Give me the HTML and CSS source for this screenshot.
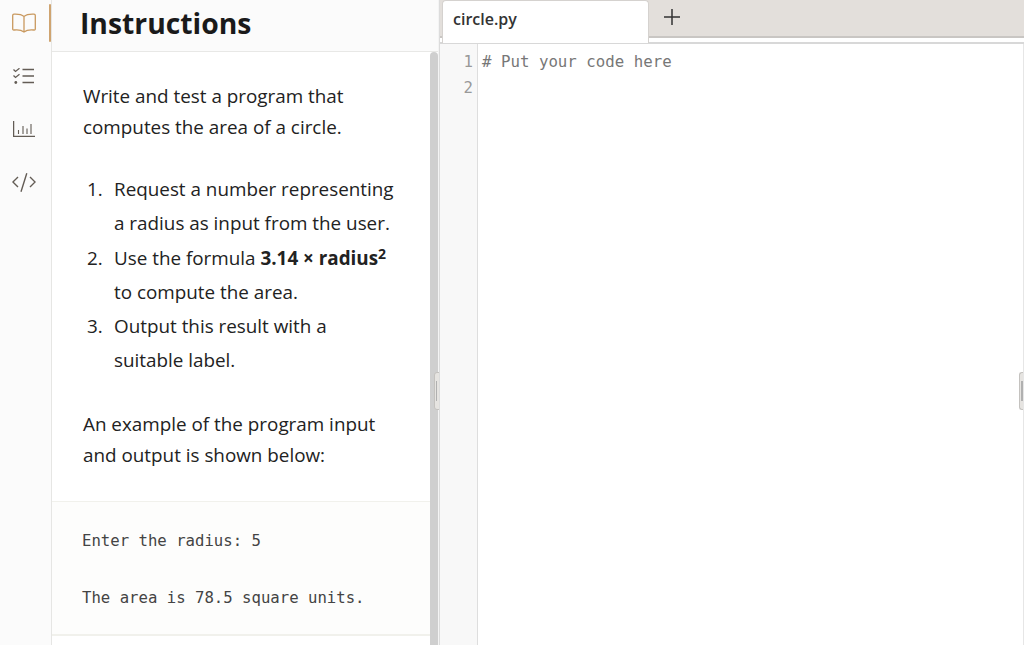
FILE: index.html
```html
<!DOCTYPE html>
<html lang="en">
<head>
<meta charset="utf-8">
<title>Instructions</title>
<link rel="stylesheet" href="styles.css">
</head>
<body>
<div class="app">
  <nav class="rail">
    <div class="rail-item active">
      <svg width="24" height="20" viewBox="0 0 24 20" fill="none" stroke="#c9995f" stroke-width="1.300"><path d="M12 3.500C10 1.800 6 1 2 1.200Q0.700 1.300 0.700 2.500V16Q0.700 17.200 2 17C6 16.500 9.500 17 12 19C14.500 17 18 16.500 22 17Q23.300 17.200 23.300 16V2.500Q23.300 1.300 22 1.200C18 1 14 1.800 12 3.500V19"/></svg>
    </div>
    <div class="rail-item">
      <svg width="22" height="16" viewBox="0 0 22 16" fill="none" stroke="#635c55" stroke-width="1.300"><path d="M9.500 1.500H21M9.500 8H21M9.500 14.500H21"/><path d="M0.500 1.500L2.500 3.500L6.500 0.300M0.500 7.500L2.500 9.500L6.500 6.300"/><circle cx="2.800" cy="14.500" r="1.400" fill="#635c55" stroke="none"/></svg>
    </div>
    <div class="rail-item">
      <svg width="22" height="16" viewBox="0 0 22 16" fill="none" stroke="#635c55" stroke-width="1.300"><path d="M0.600 0V15.300H22"/><path d="M5.500 13V9M10 13V5M14 13V7.500M18 13V3" stroke-width="1.100"/></svg>
    </div>
    <div class="rail-item">
      <svg width="24" height="19" viewBox="0 0 24 19" fill="none" stroke="#635c55" stroke-width="1.400"><path d="M6 4L0.900 9L6 14M18 4L23.100 9L18 14M14.800 0.300L9 18.700"/></svg>
    </div>
  </nav>
  <section class="instructions">
    <header class="heading"><h1>Instructions</h1></header>
    <div class="scroll">
      <div class="content">
        <p class="intro">Write and test a program that computes the area of a circle.</p>
        <ol class="steps">
          <li>Request a number representing a radius as input from the user.</li>
          <li>Use the formula <b>3.14 × radius<sup>2</sup></b> to compute the area.</li>
          <li>Output this result with a suitable label.</li>
        </ol>
        <p class="outro">An example of the program input and output is shown below:</p>
        <pre class="sample">Enter the radius: 5

The area is 78.5 square units.</pre>
      </div>
      <div class="scrollbar"></div>
    </div>
  </section>
  <div class="divider"><span class="handle"></span></div>
  <main class="workspace">
    <div class="tabs">
      <div class="tab">circle.py</div>
      <div class="add">
        <svg width="16" height="16" viewBox="0 0 16 16" stroke="#333" stroke-width="1.500"><path d="M8 0V16M0 8H16"/></svg>
      </div>
    </div>
    <div class="tab-gap"></div>
    <div class="editor">
      <div class="gutter"><span>1</span><span>2</span></div>
      <div class="code">
        <div class="line"># Put your code here</div>
      </div>
      <span class="edge-handle"></span>
    </div>
  </main>
</div>
</body>
</html>
```
FILE: styles.css
```css
* { box-sizing: border-box; }
html, body { margin: 0; height: 100%; overflow: hidden; }
body { font-family: "Open Sans", "Liberation Sans", sans-serif; color: #222; background: #fff; }
.app { display: flex; width: 1024px; height: 645px; }

.rail { width: 52px; flex: none; background: #fbfbfb; border-right: 1px solid #e6e6e4; display: flex; flex-direction: column; gap: 15px; padding-top: 4px; }
.rail-item { height: 38px; flex: none; display: flex; justify-content: center; align-items: center; padding-right: 3px; position: relative; }
.rail-item.active::after { content: ""; position: absolute; right: 0; top: 0; width: 2.500px; height: 38px; background: #cfa470; border-radius: 1.500px; }

.instructions { width: 386px; flex: none; display: flex; flex-direction: column; height: 645px; }
.heading { height: 52px; flex: none; background: #fbfbfb; border-bottom: 1px solid #e8e8e6; padding-left: 28px; }
.heading h1 { margin: 0; font-size: 28.300px; line-height: 46px; font-weight: 700; color: #1a1a1a; }

.scroll { flex: 1; display: flex; min-height: 0; }
.content { flex: 1; min-width: 0; background: #fff; font-size: 18.850px; line-height: 31px; overflow: hidden; }
.intro { margin: 29px 40px 0 31px; }
.steps { margin: 29px 30px 0 0; padding: 0 0 0 62px; line-height: 34.300px; list-style: none; counter-reset: step; }
.steps li { counter-increment: step; }
.steps li::before { content: counter(step) "."; display: inline-block; width: 27px; margin-left: -27px; }
.steps sup { font-size: 14px; line-height: 0; vertical-align: 6px; }
.outro { margin: 31px 40px 0 31px; }
.sample { margin: 30px 0 0; height: 135px; background: #fdfdfc; border-top: 1px solid #f1f1ec; border-bottom: 2px solid #f1f1ec; padding: 25px 0 0 30px; font-family: "DejaVu Sans Mono", monospace; font-size: 15.650px; line-height: 28.500px; color: #444; }
.scrollbar { width: 8px; flex: none; background: #cfcfcf; border-radius: 4px 4px 0 0; }

.divider { width: 1px; flex: none; background: #f4f4f4; position: relative; }
.handle { position: absolute; left: -4px; top: 372px; width: 8px; height: 38px; background: #e6e4e1; border: 1px solid #c4c2bf; border-radius: 3px; }
.handle::after { content: ""; position: absolute; left: 1px; top: 8px; width: 4px; height: 20px; border-left: 1.500px solid #b0b0b0; border-right: 1.500px solid #b0b0b0; }

.workspace { flex: 1; min-width: 0; display: flex; flex-direction: column; border-left: 1px solid #dcdcdc; position: relative; }
.tabs { height: 38px; flex: none; background: #e3dfdb; border-bottom: 2px solid #c9c6c3; display: flex; padding-left: 2px; }
.tab { width: 207px; height: 43px; background: #fff; border: 1px solid #d5d2cf; border-bottom: 0; border-radius: 4px 4px 0 0; font-size: 16px; font-weight: 600; line-height: 36px; padding-left: 10px; color: #333; position: relative; }
.add { width: 46px; display: flex; justify-content: center; padding-top: 9px; align-items: flex-start; }
.tab-gap { height: 6px; flex: none; background: #fff; border-bottom: 2px solid #d8d8d8; }
.editor { flex: 1; display: flex; position: relative; border-right: 1px solid #e6e6e6; padding-right: 1px; font-family: "DejaVu Sans Mono", monospace; font-size: 15.750px; line-height: 26px; }
.gutter { width: 38px; flex: none; background: #f8f8f8; border-right: 1px solid #dedede; padding: 5px 4px 0 0; text-align: right; color: #999; display: flex; flex-direction: column; }
.code { flex: 1; padding: 5px 0 0 4px; color: #777; }
.edge-handle { position: absolute; right: 0; top: 328px; width: 4px; height: 38px; background: #e6e4e1; border: 1px solid #c4c2bf; border-right: 0; border-radius: 3px 0 0 3px; }
.edge-handle::after { content: ""; display: block; margin: 8px 0 0 1px; width: 1.500px; height: 20px; background: #b0b0b0; }
```
